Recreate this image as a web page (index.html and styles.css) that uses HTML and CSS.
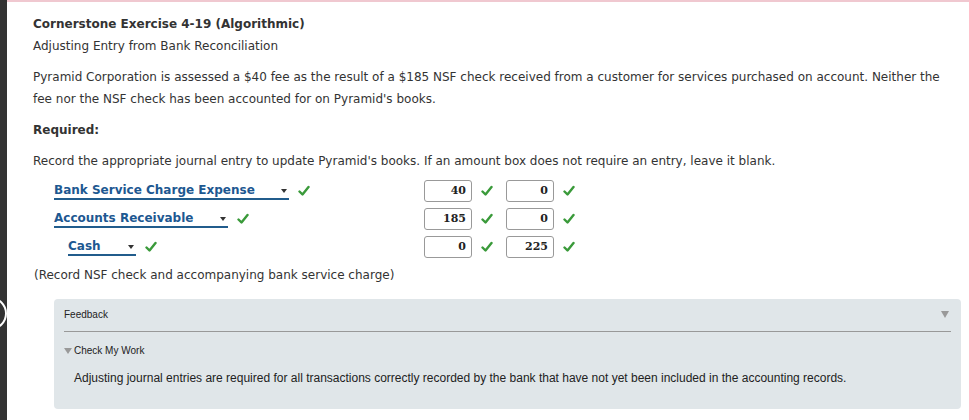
FILE: index.html
```html
<!DOCTYPE html>
<html lang="en">
<head>
    <meta charset="UTF-8">
    <title>Cornerstone Exercise 4-19</title>
    <link rel="stylesheet" href="styles.css">
</head>
<body>
    <div class="sidebar">
        <span class="ring"></span>
    </div>

    <main class="question">
        <h1>Cornerstone Exercise 4-19 (Algorithmic)</h1>
        <p class="subtitle">Adjusting Entry from Bank Reconciliation</p>

        <p class="body-text">Pyramid Corporation is assessed a $40 fee as the result of a $185 NSF check received from a customer for services purchased on account. Neither the fee nor the NSF check has been accounted for on Pyramid's books.</p>

        <h2>Required:</h2>

        <p class="instructions">Record the appropriate journal entry to update Pyramid's books. If an amount box does not require an entry, leave it blank.</p>

        <div class="journal">
            <div class="entry">
                <div class="account">
                    <span class="select wide">Bank Service Charge Expense<span class="arrow"></span></span>
                    <svg class="check" viewBox="0 0 12 12"><path d="M1.5 6.5 L4.5 9.5 L10.5 2"/></svg>
                </div>
                <div class="amounts">
                    <span class="amount">40</span><svg class="check" viewBox="0 0 12 12"><path d="M1.5 6.5 L4.5 9.5 L10.5 2"/></svg>
                    <span class="amount">0</span><svg class="check" viewBox="0 0 12 12"><path d="M1.5 6.5 L4.5 9.5 L10.5 2"/></svg>
                </div>
            </div>
            <div class="entry">
                <div class="account">
                    <span class="select medium">Accounts Receivable<span class="arrow"></span></span>
                    <svg class="check" viewBox="0 0 12 12"><path d="M1.5 6.5 L4.5 9.5 L10.5 2"/></svg>
                </div>
                <div class="amounts">
                    <span class="amount">185</span><svg class="check" viewBox="0 0 12 12"><path d="M1.5 6.5 L4.5 9.5 L10.5 2"/></svg>
                    <span class="amount">0</span><svg class="check" viewBox="0 0 12 12"><path d="M1.5 6.5 L4.5 9.5 L10.5 2"/></svg>
                </div>
            </div>
            <div class="entry">
                <div class="account credit">
                    <span class="select small">Cash<span class="arrow"></span></span>
                    <svg class="check" viewBox="0 0 12 12"><path d="M1.5 6.5 L4.5 9.5 L10.5 2"/></svg>
                </div>
                <div class="amounts">
                    <span class="amount">0</span><svg class="check" viewBox="0 0 12 12"><path d="M1.5 6.5 L4.5 9.5 L10.5 2"/></svg>
                    <span class="amount">225</span><svg class="check" viewBox="0 0 12 12"><path d="M1.5 6.5 L4.5 9.5 L10.5 2"/></svg>
                </div>
            </div>
            <p class="note">(Record NSF check and accompanying bank service charge)</p>
        </div>

        <section class="feedback">
            <div class="feedback-head">
                <span>Feedback</span>
                <span class="tri"></span>
            </div>
            <div class="check-work"><span class="tri small-tri"></span>Check My Work</div>
            <p class="feedback-text">Adjusting journal entries are required for all transactions correctly recorded by the bank that have not yet been included in the accounting records.</p>
        </section>
    </main>
</body>
</html>
```

FILE: styles.css
```css
* {
    margin: 0;
    padding: 0;
    box-sizing: border-box;
}

body {
    font-family: 'DejaVu Sans', Verdana, sans-serif;
    font-size: 12px;
    color: #333;
    background: #fff;
    display: flex;
    height: 420px;
    overflow: hidden;
}

.sidebar {
    width: 7px;
    background-color: #333;
    position: relative;
    flex-shrink: 0;
}

/* edge of a round button peeking from the left */
.ring {
    position: absolute;
    left: -26px;
    top: 297px;
    width: 33px;
    height: 33px;
    border: 2px solid #fff;
    border-radius: 50%;
}

.question {
    flex: 1;
    margin-right: 2px;
    border-top: 2px solid #f0c8d0;
    border-right: 1px solid #ccc;
    padding: 14px 8px 0 26px;
}

h1 {
    font-size: 12px;
    font-weight: bold;
    line-height: 16px;
}

.subtitle {
    margin-top: 6px;
    line-height: 16px;
}

.body-text {
    margin-top: 12px;
    line-height: 22px;
}

h2 {
    margin-top: 12px;
    font-size: 12px;
    line-height: 16px;
}

.instructions {
    margin-top: 15px;
    line-height: 16px;
}

.journal {
    margin-top: 8px;
}

.entry {
    display: flex;
    align-items: center;
    height: 28px;
}

.account {
    width: 391px;
    padding-left: 21px;
    display: flex;
    align-items: center;
}

.account.credit {
    padding-left: 35px;
}

.select {
    position: relative;
    display: inline-block;
    color: #1d5891;
    font-weight: bold;
    line-height: 15px;
    border-bottom: 2px solid #215c8c;
    padding-right: 14px;
}

.select.wide {
    width: 235px;
}

.select.medium {
    width: 174px;
}

.select.small {
    width: 68px;
}

.arrow {
    position: absolute;
    right: 2px;
    top: 6px;
    border-left: 3px solid transparent;
    border-right: 3px solid transparent;
    border-top: 4px solid #333;
}

.check {
    width: 12px;
    height: 12px;
    margin-left: 9px;
    margin-right: 13px;
    fill: none;
    stroke: #3a9a3a;
    stroke-width: 2.4;
    stroke-linecap: round;
    stroke-linejoin: round;
}

.amounts {
    display: flex;
    align-items: center;
}

.amount {
    display: inline-block;
    width: 48px;
    height: 22px;
    border: 1px solid #999;
    border-radius: 3px;
    text-align: right;
    padding-right: 5px;
    font-size: 11px;
    line-height: 20px;
    color: #222;
    font-family: 'DejaVu Serif', Georgia, serif;
    font-weight: bold;
}

.note {
    margin-top: 6px;
    padding-left: 1px;
    line-height: 16px;
}

.feedback {
    margin: 16px 0 0 21px;
    background-color: #e0e6e9;
    border-radius: 4px;
    padding: 10px 10px 23px 10px;
    font-family: 'Liberation Sans', Arial, sans-serif;
    color: #222;
    width: 907px;
}

.feedback-head {
    display: flex;
    justify-content: space-between;
    align-items: center;
    font-size: 10px;
    padding-bottom: 11px;
    border-bottom: 1px solid #999;
}

.tri {
    display: inline-block;
    border-left: 4px solid transparent;
    border-right: 4px solid transparent;
    border-top: 7px solid #999;
    margin-right: 2px;
}

.small-tri {
    border-left-width: 4px;
    border-right-width: 4px;
    border-top-width: 6px;
    margin-right: 2px;
}

.check-work {
    margin-top: 13px;
    font-size: 10px;
    display: flex;
    align-items: center;
}

.feedback-text {
    margin-top: 14px;
    padding-left: 10px;
    font-size: 12px;
    line-height: 16px;
}
```
